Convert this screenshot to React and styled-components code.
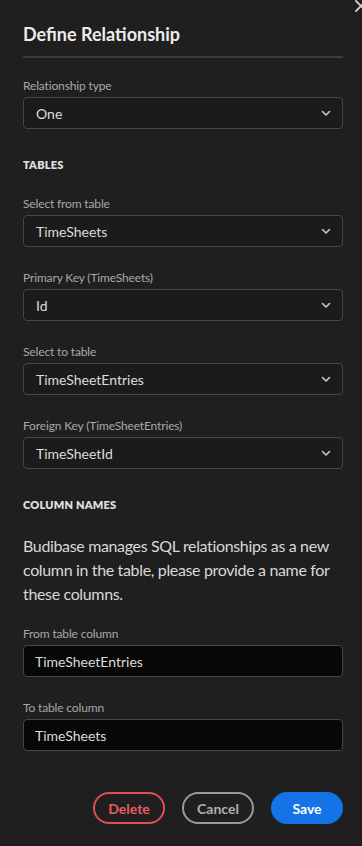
import React from 'react'
import styled, { createGlobalStyle } from 'styled-components'

const GlobalStyle = createGlobalStyle`
  html, body {
    margin: 0;
    background: #1f1f1f;
    font-family: "Lato", "Open Sans", sans-serif;
    color: #e2e2e2;
  }
`

const Chevron = () => (
  <svg width="12" height="12" viewBox="0 0 12 12" fill="none">
    <path d="M2.5 4.5 L6 8 L9.5 4.5" stroke="#c8c8c8" strokeWidth="1.6" strokeLinecap="round" strokeLinejoin="round" />
  </svg>
)

const Select = ({ label, value }) => (
  <Field>
    <Label>{label}</Label>
    <SelectBox>
      <span>{value}</span>
      <Chevron />
    </SelectBox>
  </Field>
)

const TextInput = ({ label, value }) => (
  <Field>
    <Label>{label}</Label>
    <InputBox defaultValue={value} />
  </Field>
)

const App = () => {
  return (
    <>
      <GlobalStyle />
      <Panel>
        <Close>
          <svg width="14" height="14" viewBox="0 0 14 14">
            <path d="M2 2 L12 12 M12 2 L2 12" stroke="#d0d0d0" strokeWidth="1.8" strokeLinecap="round" />
          </svg>
        </Close>
        <Title>Define Relationship</Title>
        <Divider />
        <Select label="Relationship type" value="One" />
        <Heading>TABLES</Heading>
        <Select label="Select from table" value="TimeSheets" />
        <Select label="Primary Key (TimeSheets)" value="Id" />
        <Select label="Select to table" value="TimeSheetEntries" />
        <Select label="Foreign Key (TimeSheetEntries)" value="TimeSheetId" />
        <Heading>COLUMN NAMES</Heading>
        <Body>
          Budibase manages SQL relationships as a new column in the table, please provide a name for these columns.
        </Body>
        <TextInput label="From table column" value="TimeSheetEntries" />
        <TextInput label="To table column" value="TimeSheets" />
        <Actions>
          <Button $variant="delete">Delete</Button>
          <Button $variant="cancel">Cancel</Button>
          <Button $variant="save">Save</Button>
        </Actions>
      </Panel>
    </>
  )
}

export default App

const Panel = styled.div`
  position: relative;
  width: 362px;
  height: 846px;
  box-sizing: border-box;
  padding: 22px 19px 0 23px;
  background: #1f1f1f;
  overflow: hidden;
`

const Close = styled.div`
  position: absolute;
  top: -3px;
  right: -6px;
`

const Title = styled.h2`
  margin: 0;
  font-size: 18px;
  font-weight: 700;
  line-height: 24px;
  color: #ececec;
`

const Divider = styled.div`
  height: 2px;
  background: #3c3c3c;
  margin: 10px 0 20px;
`

const Field = styled.div`
  display: flex;
  flex-direction: column;
  gap: 3px;
  margin-bottom: 23px;
`

const Label = styled.label`
  font-size: 12px;
  line-height: 16px;
  letter-spacing: -0.15px;
  color: #a8a8a8;
`

const SelectBox = styled.div`
  display: flex;
  align-items: center;
  justify-content: space-between;
  height: 32px;
  box-sizing: border-box;
  padding: 0 10px 0 12px;
  border: 1px solid #474747;
  border-radius: 4px;
  background: #1b1b1b;
  font-size: 14px;
  color: #dcdcdc;
`

const InputBox = styled.input`
  display: block;
  height: 32px;
  box-sizing: border-box;
  margin: 0;
  padding: 0 11px;
  border: 1px solid #474747;
  border-radius: 4px;
  background: #070707;
  font-family: inherit;
  font-size: 14px;
  color: #dcdcdc;
  outline: none;
`

const Heading = styled.div`
  font-size: 11px;
  font-weight: 800;
  line-height: 14px;
  letter-spacing: 0.2px;
  color: #e0e0e0;
  margin: 29px 0 24px;
`

const Body = styled.p`
  margin: -2px 0 20px;
  font-size: 16px;
  line-height: 24px;
  letter-spacing: -0.35px;
  color: #d8d8d8;
`

const Actions = styled.div`
  display: flex;
  justify-content: flex-end;
  gap: 17px;
  margin-top: 41px;
`

const colors = {
  delete: { border: '#e34c55', text: '#ec5b62', bg: 'transparent' },
  cancel: { border: '#9a9a9a', text: '#b0b0b0', bg: 'transparent' },
  save: { border: '#1473e6', text: '#ffffff', bg: '#1473e6' },
}

const Button = styled.button`
  height: 32px;
  min-width: 72px;
  box-sizing: border-box;
  padding: 0 12px;
  border-radius: 16px;
  border: 2px solid ${p => colors[p.$variant].border};
  background: ${p => colors[p.$variant].bg};
  color: ${p => colors[p.$variant].text};
  font-family: inherit;
  font-size: 14px;
  font-weight: 700;
`
